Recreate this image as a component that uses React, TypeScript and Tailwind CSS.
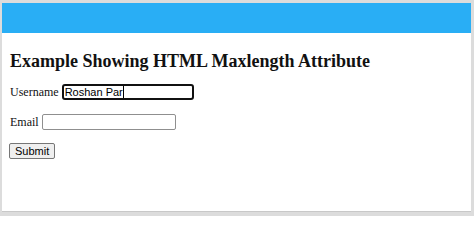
import React from "react";

export default function App() {
  return (
    <div className="w-[474px] h-[216px] bg-[#dcdcdc] pt-[3px] pl-[2px] pr-[3px] pb-[4px]">
      <div className="w-full h-full bg-white flex flex-col border-b border-[#c8c8c8]">
        <div className="h-[30px] bg-[#29aef5] shrink-0" />
        <div className="pl-[8px] pt-[17px] text-[#111]" style={{ fontFamily: '"Liberation Serif", serif' }}>
          <h2 className="text-[18px] font-bold leading-[22px]">Example Showing HTML Maxlength Attribute</h2>
          <div className="mt-[12px] flex items-center h-[16px] text-[12px]">
            <span>Username</span>
            <div
              className="ml-[3px] w-[132px] h-[16px] border-2 border-[#111] rounded-[3px] flex items-center pl-px text-[11px] text-black"
              style={{ fontFamily: '"Liberation Sans", sans-serif' }}
            >
              Roshan Par<span className="inline-block w-px h-[12px] bg-black" />
            </div>
          </div>
          <div className="mt-[14px] flex items-center h-[16px] text-[12px]">
            <span>Email</span>
            <div className="ml-[3px] w-[134px] h-[16px] border border-[#8f8f8f] rounded-[2px] bg-white" />
          </div>
          <div className="mt-[13px] flex">
            <div
              className="h-[16px] px-[5px] flex items-center border border-[#767676] rounded-[2px] bg-[#efefef] text-[11px] text-black -ml-px"
              style={{ fontFamily: '"Liberation Sans", sans-serif' }}
            >
              Submit
            </div>
          </div>
        </div>
      </div>
    </div>
  );
}
